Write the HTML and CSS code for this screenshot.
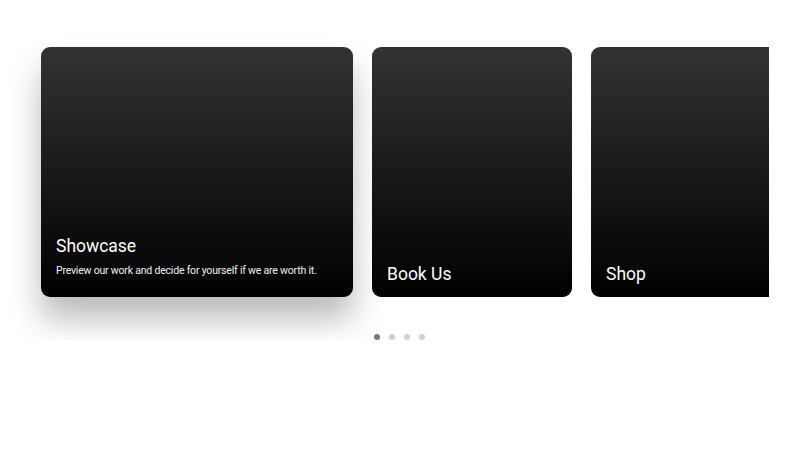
FILE: index.html
```html
<!DOCTYPE html>
<html>
<head>
<meta charset="utf-8">
<link rel="stylesheet" href="styles.css">
</head>
<body>
<div class="carousel">
  <div class="track">
    <div class="card card-active">
      <div class="title">Showcase</div>
      <div class="desc">Preview our work and decide for yourself if we are worth it.</div>
    </div>
    <div class="card card-small">
      <div class="title">Book Us</div>
    </div>
    <div class="card card-small">
      <div class="title">Shop</div>
    </div>
  </div>
</div>
<div class="dots">
  <span class="dot dot-active"></span>
  <span class="dot"></span>
  <span class="dot"></span>
  <span class="dot"></span>
</div>
</body>
</html>
```
FILE: styles.css
```css
html, body {
  margin: 0;
  padding: 0;
  background: #fff;
  font-family: Roboto, "Liberation Sans", sans-serif;
}
.carousel {
  width: 769px;
  overflow: hidden;
  padding: 47px 0 60px;
}
.track {
  display: flex;
  gap: 19px;
  padding-left: 41px;
}
.card {
  flex: 0 0 auto;
  height: 250px;
  border-radius: 9px;
  background: linear-gradient(to bottom, #333333 0%, #000000 100%);
  box-sizing: border-box;
  display: flex;
  flex-direction: column;
  justify-content: flex-end;
  color: #fff;
}
.card-active {
  width: 312px;
  padding: 0 15px 19px;
  box-shadow: 0 22px 32px rgba(0, 0, 0, 0.27);
}
.card-small {
  width: 200px;
  padding: 0 15px 11px;
}
.title {
  font-size: 17.5px;
  line-height: 24px;
}
.card-active .title {
  margin-bottom: 6px;
}
.desc {
  font-size: 10.5px;
  line-height: 14px;
  letter-spacing: -0.2px;
  white-space: nowrap;
  color: #f0f0f0;
}
.dots {
  display: flex;
  gap: 9px;
  margin-top: -23px;
  padding-left: 374px;
}
.dot {
  width: 6px;
  height: 6px;
  border-radius: 50%;
  background: #d0d0d0;
}
.dot-active {
  background: #777;
}
```
